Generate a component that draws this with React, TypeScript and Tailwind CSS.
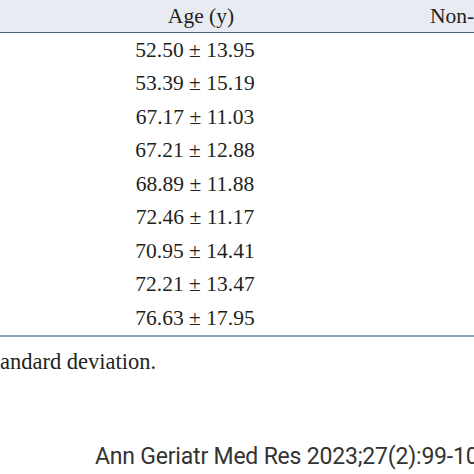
const rows = [
  "52.50 ± 13.95",
  "53.39 ± 15.19",
  "67.17 ± 11.03",
  "67.21 ± 12.88",
  "68.89 ± 11.88",
  "72.46 ± 11.17",
  "70.95 ± 14.41",
  "72.21 ± 13.47",
  "76.63 ± 17.95",
];

export default function App() {
  return (
    <div className="w-[474px] h-[474px] overflow-hidden bg-white text-[#231f20] font-['Liberation_Serif',serif]">
      <div className="flex h-[33px] items-center bg-[#e8ecf2] border-b border-[#4f6680] text-[21.5px] whitespace-nowrap">
        <div className="w-[60px] shrink-0" />
        <div className="w-[282px] shrink-0 text-center">Age (y)</div>
        <div className="pl-[88px]">Non-dementia</div>
      </div>
      <div className="border-b-2 border-[#8aa3b8]">
        {rows.map((r) => (
          <div key={r} className="flex h-[33.5px] items-center text-[21.5px] whitespace-nowrap">
            <div className="w-[60px] shrink-0" />
            <div className="w-[270px] shrink-0 text-center">{r}</div>
          </div>
        ))}
      </div>
      <p className="ml-[-55px] mt-[8px] text-[22.5px] whitespace-nowrap">SD, standard deviation.</p>
      <p className="mt-[62px] pl-[95px] text-[23px] tracking-[-0.2px] text-[#333] whitespace-nowrap font-['Roboto',sans-serif]">
        Ann Geriatr Med Res 2023;27(2):99-107
      </p>
    </div>
  );
}
